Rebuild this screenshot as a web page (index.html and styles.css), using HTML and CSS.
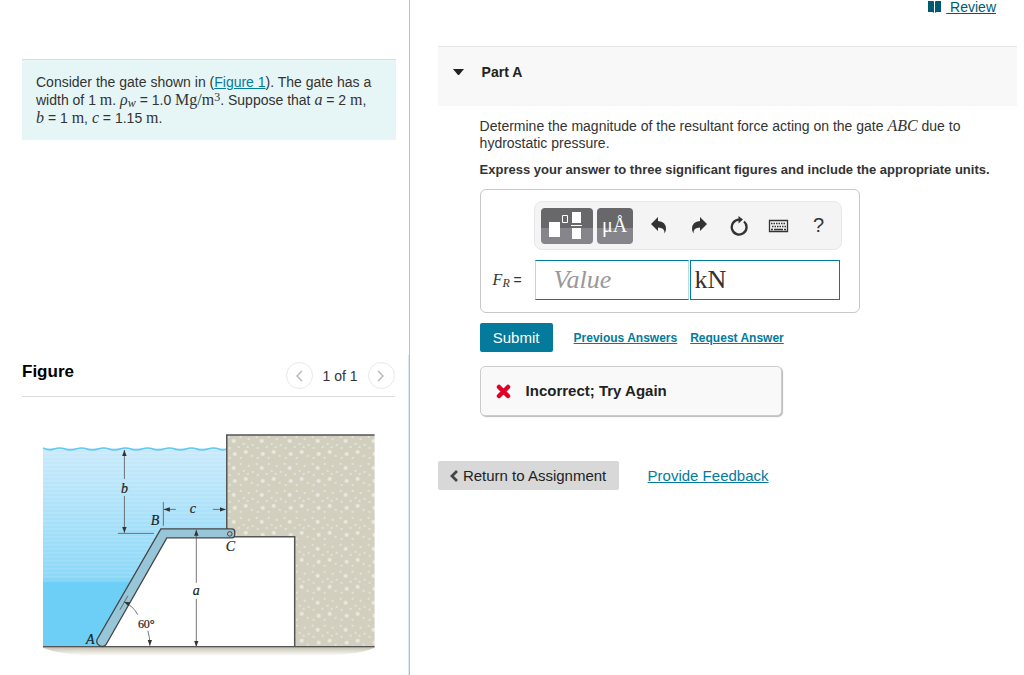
FILE: index.html
```html
<!DOCTYPE html>
<html lang="en">
<head>
    <meta charset="UTF-8">
    <meta name="viewport" content="width=device-width, initial-scale=1">
    <title>Hydrostatic Gate - Part A</title>
    <link rel="stylesheet" href="styles.css">
</head>
<body>

    <!-- Left pane: problem text and figure -->
    <aside class="sidebar">
        <section class="problem">
            <p class="problem-text">
                Consider the gate shown in (<a href="#figure">Figure 1</a>). The gate has a width of 1 <span class="math">m</span>.
                <i class="math">ρ<sub>w</sub></i> = 1.0 <span class="math">Mg/m<sup>3</sup></span>. Suppose that
                <i class="math">a</i> = 2 <span class="math">m</span>, <span class="equation"><i class="math">b</i> = 1 <span class="math">m</span></span>,
                <span class="equation"><i class="math">c</i> = 1.15 <span class="math">m</span></span>.
            </p>
        </section>

        <section class="figure-pane" id="figure">
            <div class="figure-header">
                <h2>Figure</h2>
                <div class="pager">
                    <button class="pager-btn" aria-label="Previous figure">
                        <svg width="10" height="14" viewBox="0 0 10 14"><path d="M8 2 3 7l5 5"/></svg>
                    </button>
                    <span class="pager-label">1 of 1</span>
                    <button class="pager-btn" aria-label="Next figure">
                        <svg width="10" height="14" viewBox="0 0 10 14"><path d="M2 2l5 5-5 5"/></svg>
                    </button>
                </div>
            </div>

            <svg class="diagram" viewBox="42 432 334 226" role="img" aria-label="Gate ABC holding back water">
                <defs>
                    <linearGradient id="water" x1="0" y1="0" x2="0" y2="1">
                        <stop offset="0" stop-color="#caeafb"/>
                        <stop offset="0.65" stop-color="#8bd8f7"/>
                        <stop offset="0.68" stop-color="#6dcff5"/>
                        <stop offset="1" stop-color="#6dcff5"/>
                    </linearGradient>
                    <linearGradient id="ground" x1="0" y1="0" x2="0" y2="1">
                        <stop offset="0" stop-color="#c9c5b4"/>
                        <stop offset="1" stop-color="#ffffff"/>
                    </linearGradient>
                    <pattern id="ripple" x="0" y="448" width="10" height="4" patternUnits="userSpaceOnUse">
                        <path d="M0 1h10" stroke="#ffffff" stroke-opacity="0.22"/>
                    </pattern>
                    <pattern id="stone" x="227" y="434" width="28" height="27" patternUnits="userSpaceOnUse">
                        <rect width="28" height="27" fill="#d2cfbf"/>
                        <g fill="#e9e8e2">
                            <circle cx="7" cy="7" r="2"/><circle cx="19" cy="18" r="2"/>
                            <circle cx="14" cy="3" r="1"/><circle cx="22" cy="5" r="1"/>
                            <circle cx="26" cy="11" r="1"/><circle cx="3" cy="14" r="1"/>
                            <circle cx="12" cy="13" r="1"/><circle cx="17" cy="10" r="1"/>
                            <circle cx="8" cy="20" r="2"/><circle cx="25" cy="22" r="1"/>
                            <circle cx="14" cy="24" r="1"/><circle cx="3" cy="24" r="1"/>
                            <circle cx="2" cy="3" r="1"/><circle cx="21" cy="13" r="1"/>
                        </g>
                    </pattern>
                    <marker id="arrow" viewBox="0 0 8 6" refX="8" refY="3" markerWidth="6" markerHeight="5" markerUnits="userSpaceOnUse" orient="auto-start-reverse">
                        <path d="M0 0l8 3-8 3z" fill="#333"/>
                    </marker>
                </defs>

                <!-- water -->
                <path d="M43 448H227V534H164L100 647H43z" fill="url(#water)"/>
                <path d="M43 448H227V534H164L139 582H43z" fill="url(#ripple)"/>
                <path d="M43 448q5 3 11 1t11 0 11 0 11 0 11 0 11 0 11 0 11 0 11 0 11 0 11 0 11 0 11 0 11 0 11 0 11 0 8 0" fill="none" stroke="#62c8f0" stroke-width="1.5"/>

                <!-- ground and concrete wall -->
                <path d="M43 648H375Q355 657 300 656H110Q60 656 43 648z" fill="url(#ground)"/>
                <path d="M227 435H375V647H295V537H227z" fill="url(#stone)"/>
                <path d="M375 435H227V537H295V647" class="edge"/>
                <path d="M43 647H375" class="edge"/>

                <!-- gate -->
                <path d="M97 640 161 529H232q3 0 3 3v3q0 3-3 3H167L106 645q-2 3-6 1-4-2-3-6z" fill="#96c6d8" stroke="#444" stroke-width="1.3"/>
                <circle cx="230" cy="534" r="2.3" fill="#bbb" stroke="#444"/>

                <!-- dimensions -->
                <g class="dim">
                    <path d="M124.500 479V450" marker-end="url(#arrow)"/>
                    <path d="M124.500 496V533" marker-end="url(#arrow)"/>
                    <path d="M118 533.500H154M163.500 502V526"/>
                    <path d="M176 509.500H164" marker-end="url(#arrow)"/>
                    <path d="M213 509.500H226" marker-end="url(#arrow)"/>
                    <path d="M196.500 583V530" marker-end="url(#arrow)"/>
                    <path d="M196.500 599V647" marker-end="url(#arrow)"/>
                    <path d="M138 615Q133 606 124 602" marker-end="url(#arrow)"/>
                    <path d="M148 631Q150 637 150 646" marker-end="url(#arrow)"/>
                    <path d="M128 596 120 610"/>
                </g>
                <g class="dim-text">
                    <text x="121" y="493">b</text>
                    <text x="151" y="525">B</text>
                    <text x="190" y="513">c</text>
                    <text x="226" y="551">C</text>
                    <text x="193" y="595">a</text>
                    <text x="86" y="644">A</text>
                    <text x="138" y="628" class="angle">60°</text>
                </g>
            </svg>
        </section>
    </aside>

    <!-- Right pane: question and answer -->
    <main class="content">
        <div class="review">
            <svg width="13" height="12" viewBox="0 0 13 12" aria-hidden="true"><path d="M0 0h5q1 0 1 1v11q-1-1-2-1H0zM13 0H8Q7 0 7 1v11q1-1 2-1h4z"/></svg>
            <a href="#review">&nbsp;Review</a>
        </div>

        <header class="part-header">
            <button class="collapse-btn" aria-label="Collapse Part A">
                <svg width="11" height="7" viewBox="0 0 11 7"><path d="M0 0h11L6 6H5z"/></svg>
            </button>
            <h1>Part A</h1>
        </header>

        <div class="part-body">
            <p class="question">Determine the magnitude of the resultant force acting on the gate <i class="math">ABC</i> due to hydrostatic pressure.</p>
            <p class="instructions">Express your answer to three significant figures and include the appropriate units.</p>

            <div class="answer-box">
                <div class="toolbar">
                    <button class="tool-dark templates" aria-label="Templates">
                        <svg width="52" height="36" viewBox="0 0 52 36" fill="#fff">
                            <path d="M8 14h11v15H8zM31 4h9v11h-9zM31 20h9v11h-9zM30 17h11v1H30z"/>
                            <path d="M21.500 7.500h5v7h-5z" fill="none" stroke="#fff"/>
                        </svg>
                    </button>
                    <button class="tool-dark symbols" aria-label="Symbols">μÅ</button>
                    <button class="tool" aria-label="Undo">
                        <svg width="16" height="18" viewBox="0 0 16 18"><path d="M7 0v4q8 .5 8 8 0 2-1.500 4.500.5-6-6.500-6v3.500L0 7z"/></svg>
                    </button>
                    <button class="tool" aria-label="Redo">
                        <svg width="16" height="18" viewBox="0 0 16 18"><path d="M9 0v4q-8 .5-8 8 0 2 1.500 4.500-.5-6 6.500-6v3.500l7-7z"/></svg>
                    </button>
                    <button class="tool" aria-label="Reset">
                        <svg width="18" height="20" viewBox="0 0 18 20"><path d="M14 5.500A7.400 7.400 0 1 1 9 3.700" fill="none" stroke="#333" stroke-width="2.300"/><path d="M8.500 0 13 3.500 8.500 7.500z"/></svg>
                    </button>
                    <button class="tool" aria-label="Keyboard">
                        <svg width="21" height="14" viewBox="0 0 21 14">
                            <path d="M1.500 1.500h18v11h-18z" fill="none" stroke="#333" stroke-width="1.300"/>
                            <path d="M3 4.500h15M4 7.500h14" stroke="#333" stroke-width="1.700" stroke-dasharray="1.500 1"/>
                            <path d="M3 10.500h2m1 0h9m1 0h2" stroke="#333" stroke-width="1.500"/>
                        </svg>
                    </button>
                    <button class="tool help" aria-label="Help">?</button>
                </div>
                <div class="answer-row">
                    <label for="value" class="answer-label"><i class="math">F<sub>R</sub></i> =</label>
                    <input id="value" class="value-input" type="text" placeholder="Value">
                    <input class="unit-input" type="text" value="kN" aria-label="Units">
                </div>
            </div>

            <div class="actions">
                <button class="submit-btn">Submit</button>
                <a href="#previous">Previous Answers</a>
                <a href="#request">Request Answer</a>
            </div>

            <div class="feedback">
                <svg width="15" height="15" viewBox="0 0 15 15" aria-hidden="true"><path d="M3 3l9 9M12 3l-9 9" stroke="#e00028" stroke-width="4.500" stroke-linecap="round"/></svg>
                <span>Incorrect; Try Again</span>
            </div>
        </div>

        <footer class="page-footer">
            <button class="return-btn">
                <svg width="9" height="14" viewBox="0 0 9 14" aria-hidden="true"><path d="M7 2 2 7l5 5" fill="none" stroke="#444" stroke-width="2.800"/></svg>
                Return to Assignment
            </button>
            <a href="#feedback">Provide Feedback</a>
        </footer>
    </main>

</body>
</html>
```
FILE: styles.css
```css
* {
    box-sizing: border-box;
}

body {
    margin: 0;
    display: flex;
    min-height: 100vh;
    background-color: #fff;
    color: #333;
    font-family: "Liberation Sans", Arial, Helvetica, sans-serif;
    font-size: 14px;
    line-height: 18px;
}

h1, h2, p {
    margin: 0;
}

a {
    color: #047a9c;
}

button {
    font-family: inherit;
    padding: 0;
    border: none;
    background: none;
    cursor: pointer;
}

.math {
    font-family: "Liberation Serif", "Times New Roman", serif;
    font-size: 16px;
    line-height: 1;
}

.math sub,
.math sup {
    font-size: 12px;
    line-height: 0;
}

.math sub {
    vertical-align: -2px;
}

.math sup {
    vertical-align: 4px;
}

.equation {
    white-space: nowrap;
}

/* Left pane */
.sidebar {
    display: flex;
    flex-direction: column;
    width: 40%;
    border-right: 1px solid #b4bfcc;
}

.problem {
    min-height: 355px;
    padding: 59px 13px 0 22px;
}

.problem-text {
    padding: 13px 14px;
    background-color: #e6f6f7;
    border-top: 1px solid #d8dcdc;
}

.figure-pane {
    flex: 1;
    padding: 0 13px 0 22px;
    border-right: 1px solid #dbe9f3;
}

.figure-header {
    display: flex;
    justify-content: space-between;
    height: 42px;
    border-bottom: 1px solid #ddd;
}

.figure-header h2 {
    padding-top: 8px;
    color: #000;
    font-size: 17px;
}

.pager {
    display: flex;
    align-items: center;
    gap: 10px;
}

.pager-btn {
    display: flex;
    align-items: center;
    justify-content: center;
    width: 27px;
    height: 27px;
    border: 1px solid #e8e8e8;
    border-radius: 50%;
}

.pager-btn path {
    fill: none;
    stroke: #bbb;
    stroke-width: 1.5;
}

.diagram {
    display: block;
    width: 100%;
    padding: 35px 19px 0 20px;
}

.edge {
    fill: none;
    stroke: #555;
    stroke-width: 1.5;
}

.dim path {
    fill: none;
    stroke: #555;
    stroke-width: 0.8;
}

.dim-text {
    font-family: "Liberation Serif", serif;
    font-size: 14px;
    font-style: italic;
    fill: #222;
    stroke: #222;
    stroke-width: 0.2;
}

.dim-text .angle {
    font-size: 12px;
    font-style: normal;
}

/* Right pane */
.content {
    flex: 1;
    padding: 0 7px 0 28px;
}

.review {
    display: flex;
    justify-content: flex-end;
    align-items: center;
    gap: 5px;
    height: 46px;
    padding: 0 21px 32px 0;
}

.review a {
    color: #005a70;
}

.review svg {
    fill: #005a70;
}

.part-header {
    display: flex;
    gap: 18px;
    height: 60px;
    padding: 16px 15px;
    background-color: #f8f8f8;
    border-top: 1px solid #e5e5e5;
}

.part-header h1 {
    color: #222;
    font-size: 14px;
}

.collapse-btn {
    height: 18px;
}

.collapse-btn svg {
    display: block;
    fill: #222;
}

.part-body {
    padding: 12px 0 0 42px;
}

.question {
    max-width: 500px;
    line-height: 17px;
}

.instructions {
    margin: 9px 0 10px;
    font-size: 13px;
    font-weight: bold;
    white-space: nowrap;
}

.answer-box {
    width: 380px;
    padding: 11px 17px 12px 12px;
    border: 1px solid #c8c8c8;
    border-radius: 6px;
}

.toolbar {
    display: flex;
    align-items: center;
    height: 49px;
    margin-left: 41px;
    padding: 0 6px;
    background-color: #f4f4f4;
    border: 1px solid #e8e8e8;
    border-radius: 8px;
}

.tool-dark {
    flex: none;
    height: 36px;
    color: #fff;
    background: linear-gradient(#68686a 55%, #85858b 55%);
    border-radius: 4px;
}

.templates {
    width: 52px;
    margin-right: 4px;
}

.templates svg {
    display: block;
}

.symbols {
    width: 36px;
    margin-right: 6px;
    font-family: "Liberation Serif", serif;
    font-size: 20px;
}

.tool {
    display: flex;
    flex: none;
    align-items: center;
    justify-content: center;
    width: 40px;
    height: 36px;
    color: #333;
}

.tool svg {
    fill: #333;
}

.help {
    font-size: 20px;
}

.answer-row {
    display: flex;
    align-items: center;
    margin-top: 10px;
    padding-right: 2px;
}

.answer-label {
    flex: none;
    width: 42px;
    white-space: nowrap;
}

.answer-row input {
    width: 50%;
    min-width: 0;
    height: 40px;
    border: 1px solid #047a9c;
    font-family: "Liberation Serif", "Times New Roman", serif;
    font-size: 26px;
    color: #333;
}

.answer-row .value-input {
    padding: 0 18px;
    border-left-color: #b5dce6;
    border-right-color: #b5dce6;
}

.value-input::placeholder {
    color: #999;
    font-style: italic;
}

.answer-row .unit-input {
    margin-left: 1px;
    padding: 0 4px;
}

.actions {
    display: flex;
    align-items: center;
    gap: 13px;
    margin: 10px 0 14px;
    font-size: 12px;
    font-weight: bold;
}

.submit-btn {
    width: 73px;
    height: 29px;
    margin-right: 8px;
    color: #fff;
    background-color: #047a9c;
    border-radius: 2px;
    font-size: 15px;
}

.feedback {
    display: flex;
    align-items: center;
    gap: 15px;
    width: 302px;
    height: 50px;
    padding: 0 15px;
    background-color: #f9f9f9;
    border: 1px solid #ccc;
    border-radius: 5px;
    box-shadow: 1px 1px 1px #bbb;
    color: #222;
    font-size: 15px;
    font-weight: bold;
}

.page-footer {
    display: flex;
    align-items: center;
    gap: 29px;
    margin-top: 45px;
    font-size: 15px;
}

.return-btn {
    display: flex;
    align-items: center;
    justify-content: center;
    gap: 4px;
    width: 181px;
    height: 29px;
    color: #222;
    background-color: #d8d8d8;
    border-radius: 2px;
    font-size: 15px;
}
```
